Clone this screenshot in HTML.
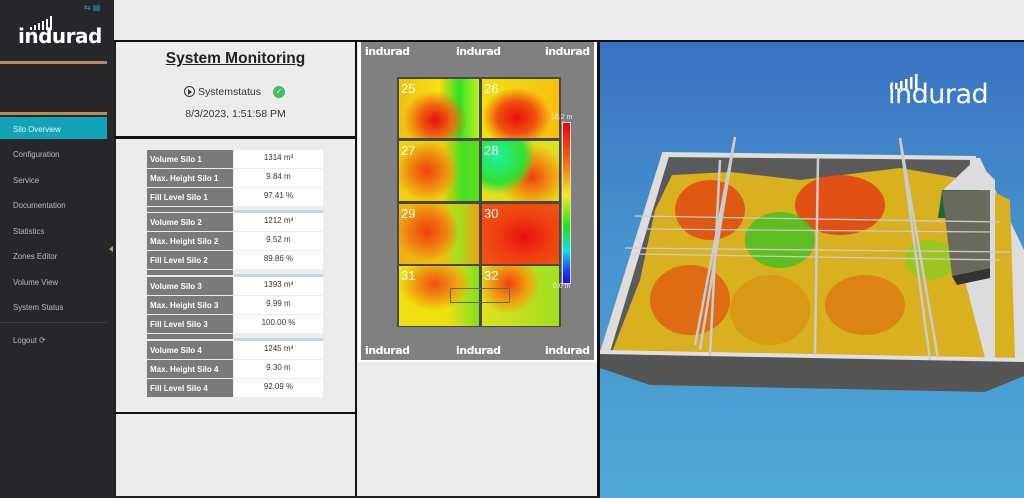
<!DOCTYPE html>
<html><head><meta charset="utf-8"><style>
*{margin:0;padding:0;box-sizing:border-box}
body{width:1024px;height:498px;overflow:hidden;background:#ececec;font-family:"Liberation Sans",sans-serif;position:relative}
.a{position:absolute}
#side{left:0;top:0;width:114px;height:498px;background:#25272a}
.gold{position:absolute;left:0;width:107px;height:3px;background:#b48c5c}
.mi{position:absolute;left:13px;font-size:8.5px;color:#b9bbbe;transform:scaleX(.92);transform-origin:left}
.logo{font-family:"DejaVu Sans",sans-serif;color:#fff;font-weight:normal;letter-spacing:-0.5px}
.tb{left:147px;width:176px}
.r{position:absolute;left:0;width:176px;height:18px;font-size:8px}
.r .l{position:absolute;left:0;top:0;width:86px;height:18px;background:#7a7a7a;color:#fff;font-weight:bold;padding:5px 3px;white-space:nowrap}
.r .v{position:absolute;left:87px;top:0;width:89px;height:18px;background:#fff;color:#333;text-align:center;padding-top:3px}
.sp{position:absolute;left:87px;width:89px;height:4px;background:#c5d3e6}
.sp2{position:absolute;left:0;width:86px;height:5px;background:#7a7a7a}
.wm{position:absolute;color:#fff;font-family:"DejaVu Sans",sans-serif;font-size:11px;font-weight:bold;letter-spacing:-0.5px}
.cell{position:absolute;width:80px;height:60px}
.num{position:absolute;left:2px;top:2px;color:#fff;font-size:13px}
</style></head><body>
<div id="side" class="a">
  <div class="a" style="left:84px;top:3px;color:#2aa8c0;font-size:8px">⇆ ▤</div>
  <svg class="a" style="left:30px;top:16px" width="40" height="14" viewBox="0 0 40 14">
    <g fill="#fff"><rect x="0" y="11" width="2" height="3"/><rect x="4" y="9" width="2" height="5"/><rect x="8" y="7" width="2" height="7"/><rect x="12" y="5" width="2" height="9"/><rect x="16" y="3" width="2" height="11"/><rect x="20" y="0" width="2" height="14"/></g></svg>
  <div class="a logo" style="left:18px;top:24px;font-size:20px;font-weight:bold">indurad</div>
  <div class="gold" style="top:61px"></div>
  <div class="gold" style="top:112px"></div>
  <div class="a" style="left:0;top:117px;width:107px;height:22px;background:#12a3b8"></div>
  <div class="mi" style="top:124px;color:#e8f6f8">Silo Overview</div>
  <div class="mi" style="top:149px">Configuration</div>
  <div class="mi" style="top:175px">Service</div>
  <div class="mi" style="top:200px">Documentation</div>
  <div class="mi" style="top:226px">Statistics</div>
  <div class="mi" style="top:251px">Zones Editor</div>
  <div class="mi" style="top:277px">Volume View</div>
  <div class="mi" style="top:302px">System Status</div>
  <div class="a" style="left:0;top:322px;width:107px;height:1px;background:#3a3c40"></div>
  <div class="mi" style="top:335px">Logout ⟳</div>
  <div class="a" style="left:109px;top:246px;width:0;height:0;border-top:3px solid transparent;border-bottom:3px solid transparent;border-right:4px solid #c9a060"></div>
</div>
<div class="a" style="left:114px;top:40px;width:910px;height:2px;background:#111"></div>
<div class="a" style="left:114px;top:42px;width:2px;height:456px;background:#222"></div>
<div class="a" style="left:355px;top:42px;width:2px;height:456px;background:#111"></div>
<div class="a" style="left:597px;top:42px;width:3px;height:456px;background:#111"></div>
<div class="a" style="left:114px;top:136px;width:243px;height:3px;background:#111"></div>
<div class="a" style="left:114px;top:412px;width:243px;height:2px;background:#111"></div>
<div class="a" style="left:114px;top:496px;width:486px;height:2px;background:#222"></div>
<div class="a" style="left:116px;top:50px;width:239px;text-align:center;font-size:15.5px;font-weight:bold;color:#222;text-decoration:underline">System Monitoring</div>
<div class="a" style="left:198px;top:86px;font-size:10.5px;color:#333">Systemstatus</div>
<div class="a" style="left:184px;top:86px;width:11px;height:11px;border:1px solid #333;border-radius:50%;background:#ececec"><div style="position:absolute;left:3px;top:2px;border-left:4px solid #333;border-top:3px solid transparent;border-bottom:3px solid transparent"></div></div>
<div class="a" style="left:273px;top:86px;width:12px;height:12px;border-radius:50%;background:#3cbf5e;color:#fff;font-size:8px;text-align:center;line-height:12px">✓</div>
<div class="a" style="left:116px;top:108px;width:239px;text-align:center;font-size:10.5px;color:#333">8/3/2023, 1:51:58 PM</div>
<div class="a tb" style="top:150px;height:250px">
  <div class="r" style="top:0"><div class="l">Volume Silo 1</div><div class="v">1314 m³</div></div>
  <div class="r" style="top:19px"><div class="l">Max. Height Silo 1</div><div class="v">9.84 m</div></div>
  <div class="r" style="top:38px"><div class="l">Fill Level Silo 1</div><div class="v">97.41 %</div></div>
  <div class="sp2" style="top:57px"></div><div class="sp" style="top:60px"></div>
  <div class="r" style="top:63px"><div class="l">Volume Silo 2</div><div class="v">1212 m³</div></div>
  <div class="r" style="top:82px"><div class="l">Max. Height Silo 2</div><div class="v">9.52 m</div></div>
  <div class="r" style="top:101px"><div class="l">Fill Level Silo 2</div><div class="v">89.86 %</div></div>
  <div class="sp2" style="top:120px"></div><div class="sp" style="top:124px"></div>
  <div class="r" style="top:127px"><div class="l">Volume Silo 3</div><div class="v">1393 m³</div></div>
  <div class="r" style="top:146px"><div class="l">Max. Height Silo 3</div><div class="v">9.99 m</div></div>
  <div class="r" style="top:165px"><div class="l">Fill Level Silo 3</div><div class="v">100.00 %</div></div>
  <div class="sp2" style="top:184px"></div><div class="sp" style="top:188px"></div>
  <div class="r" style="top:191px"><div class="l">Volume Silo 4</div><div class="v">1245 m³</div></div>
  <div class="r" style="top:210px"><div class="l">Max. Height Silo 4</div><div class="v">9.30 m</div></div>
  <div class="r" style="top:229px"><div class="l">Fill Level Silo 4</div><div class="v">92.09 %</div></div>
</div>
<div class="a" style="left:358px;top:42px;width:239px;height:320px;background:#fff"></div>
<div class="a" style="left:361px;top:42px;width:233px;height:318px;background:#808080"></div>
<div class="wm" style="left:365px;top:45px">indurad</div><div class="wm" style="left:456px;top:45px">indurad</div><div class="wm" style="left:545px;top:45px">indurad</div>
<div class="wm" style="left:365px;top:344px">indurad</div><div class="wm" style="left:456px;top:344px">indurad</div><div class="wm" style="left:545px;top:344px">indurad</div>
<div class="a" style="left:397px;top:77px;width:164px;height:250px;background:#484848"></div>
<div class="cell" style="left:399px;top:79px;height:59px;background:radial-gradient(ellipse 40% 50% at 45% 70%,#e8100c,#f06010 50%,transparent 100%),linear-gradient(90deg,#f0c010,#f8e010 50%,#30e020 75%,#c0f020)"><span class="num">25</span></div>
<div class="cell" style="left:482px;top:79px;width:77px;height:59px;background:radial-gradient(ellipse 45% 50% at 45% 65%,#e8100c,#f05010 55%,transparent 100%),linear-gradient(90deg,#f0e010,#f8c010)"><span class="num">26</span></div>
<div class="cell" style="left:399px;top:141px;background:radial-gradient(ellipse 40% 50% at 35% 50%,#f04010,#f09010 60%,transparent 100%),linear-gradient(90deg,#f0d010,#f0d010 55%,#40e020 80%,#60e020)"><span class="num">27</span></div>
<div class="cell" style="left:482px;top:141px;width:77px;background:radial-gradient(circle at 20% 25%,#20f0a0,#30e030 35%,transparent 50%),radial-gradient(ellipse 45% 55% at 65% 60%,#f04010,#f0a010 60%,transparent 100%),#e0e020"><span class="num">28</span></div>
<div class="cell" style="left:399px;top:204px;background:radial-gradient(ellipse 40% 50% at 35% 45%,#f04010,#f08010 60%,transparent 100%),linear-gradient(90deg,#f0b010,#f0c010 55%,#a0e020 75%,#f0a010)"><span class="num">29</span></div>
<div class="cell" style="left:482px;top:204px;width:77px;background:radial-gradient(ellipse 60% 60% at 55% 55%,#e81010,#f04010 60%,transparent 100%),#f05010"><span class="num">30</span></div>
<div class="cell" style="left:399px;top:266px;background:radial-gradient(ellipse 45% 45% at 45% 30%,#f05010,#f0a010 60%,transparent 100%),linear-gradient(90deg,#f0e010,#f0e010 60%,#80e020)"><span class="num">31</span></div>
<div class="cell" style="left:482px;top:266px;width:77px;background:radial-gradient(ellipse 40% 50% at 35% 30%,#f04010,#f0a010 60%,transparent 100%),linear-gradient(90deg,#e0e020,#a0e020)"><span class="num">32</span></div>
<div class="a" style="left:450px;top:288px;width:60px;height:15px;border:1px solid #666"></div>
<div class="a" style="left:562px;top:122px;width:9px;height:162px;border:1px solid #ddd;background:linear-gradient(180deg,#f00010,#f07010 25%,#f0f010 45%,#20e020 65%,#10e0e0 80%,#2040f0 92%,#1010f0)"></div>
<div class="a" style="left:551px;top:114px;font-size:7px;color:#eee">10.2 m</div>
<div class="a" style="left:553px;top:283px;font-size:7px;color:#eee">0.0 m</div>
<div class="a" style="left:600px;top:42px;width:424px;height:456px;background:linear-gradient(180deg,#3a72c2,#4590cc 40%,#4fa8d6 100%)"></div>
<svg class="a" style="left:890px;top:73px" width="40" height="16" viewBox="0 0 40 16"><g fill="#fff"><rect x="0" y="12" width="2.5" height="4"/><rect x="5" y="10" width="2.5" height="6"/><rect x="10" y="8" width="2.5" height="8"/><rect x="15" y="6" width="2.5" height="10"/><rect x="20" y="4" width="2.5" height="12"/><rect x="25" y="1" width="2.5" height="15"/></g></svg>
<div class="a logo" style="left:888px;top:79px;font-size:27px">indurad</div>
<svg class="a" style="left:600px;top:40px" width="424" height="458" viewBox="0 0 424 458">
 <polygon points="0,312 424,320 424,336 385,352 50,345 0,328" fill="#555"/>
 <polygon points="62,113 376,117 424,215 424,320 0,312" fill="#5a5a5a"/>
 <polygon points="370,118 380,118 424,210 424,318 395,318 368,215" fill="#ddd"/>
 <path d="M72,135 L130,132 200,140 300,128 370,140 410,160 415,318 12,312 40,240 55,170Z" fill="#d8b020"/>
 <ellipse cx="110" cy="170" rx="35" ry="30" fill="#e04a10" opacity=".85"/>
 <ellipse cx="240" cy="165" rx="45" ry="30" fill="#e04010" opacity=".85"/>
 <ellipse cx="90" cy="260" rx="40" ry="35" fill="#e05010" opacity=".7"/>
 <ellipse cx="265" cy="265" rx="40" ry="30" fill="#e07010" opacity=".7"/>
 <ellipse cx="170" cy="270" rx="40" ry="35" fill="#d89010" opacity=".7"/>
 <ellipse cx="180" cy="200" rx="35" ry="28" fill="#40c020" opacity=".8"/>
 <ellipse cx="330" cy="220" rx="25" ry="20" fill="#80d020" opacity=".7"/>
 <polygon points="342,151 375,120 395,140 395,318 385,318" fill="#dcdcdc"/>
 <polygon points="342,150 380,150 372,178 338,178" fill="#1a6a3a"/>
 <polygon points="342,151 390,150 390,228 352,236" fill="#6a6a5a"/>
 <polygon points="352,236 390,228 390,238 357,245" fill="#333"/>
 <polygon points="0,312 62,113 70,113 10,312" fill="#ddd"/>
 <polygon points="62,112 376,116 376,120 62,117" fill="#ddd"/>
 <polygon points="0,310 424,318 424,322 0,314" fill="#e0e0e0"/>
 <g stroke="#ccc" stroke-width="2.5" fill="none">
  <path d="M135,97 L95,305 M135,97 L100,310"/><path d="M300,98 L338,318 M300,98 L330,320"/>
  <path d="M218,117 L215,315"/><path d="M120,120 L110,316"/>
 </g>
 <g stroke="#ccc" stroke-width="1.3">
  <path d="M35,176 L400,182"/><path d="M45,189 L390,192"/><path d="M25,208 L410,212"/><path d="M35,214 L400,220"/>
 </g>
</svg>
</body></html>
